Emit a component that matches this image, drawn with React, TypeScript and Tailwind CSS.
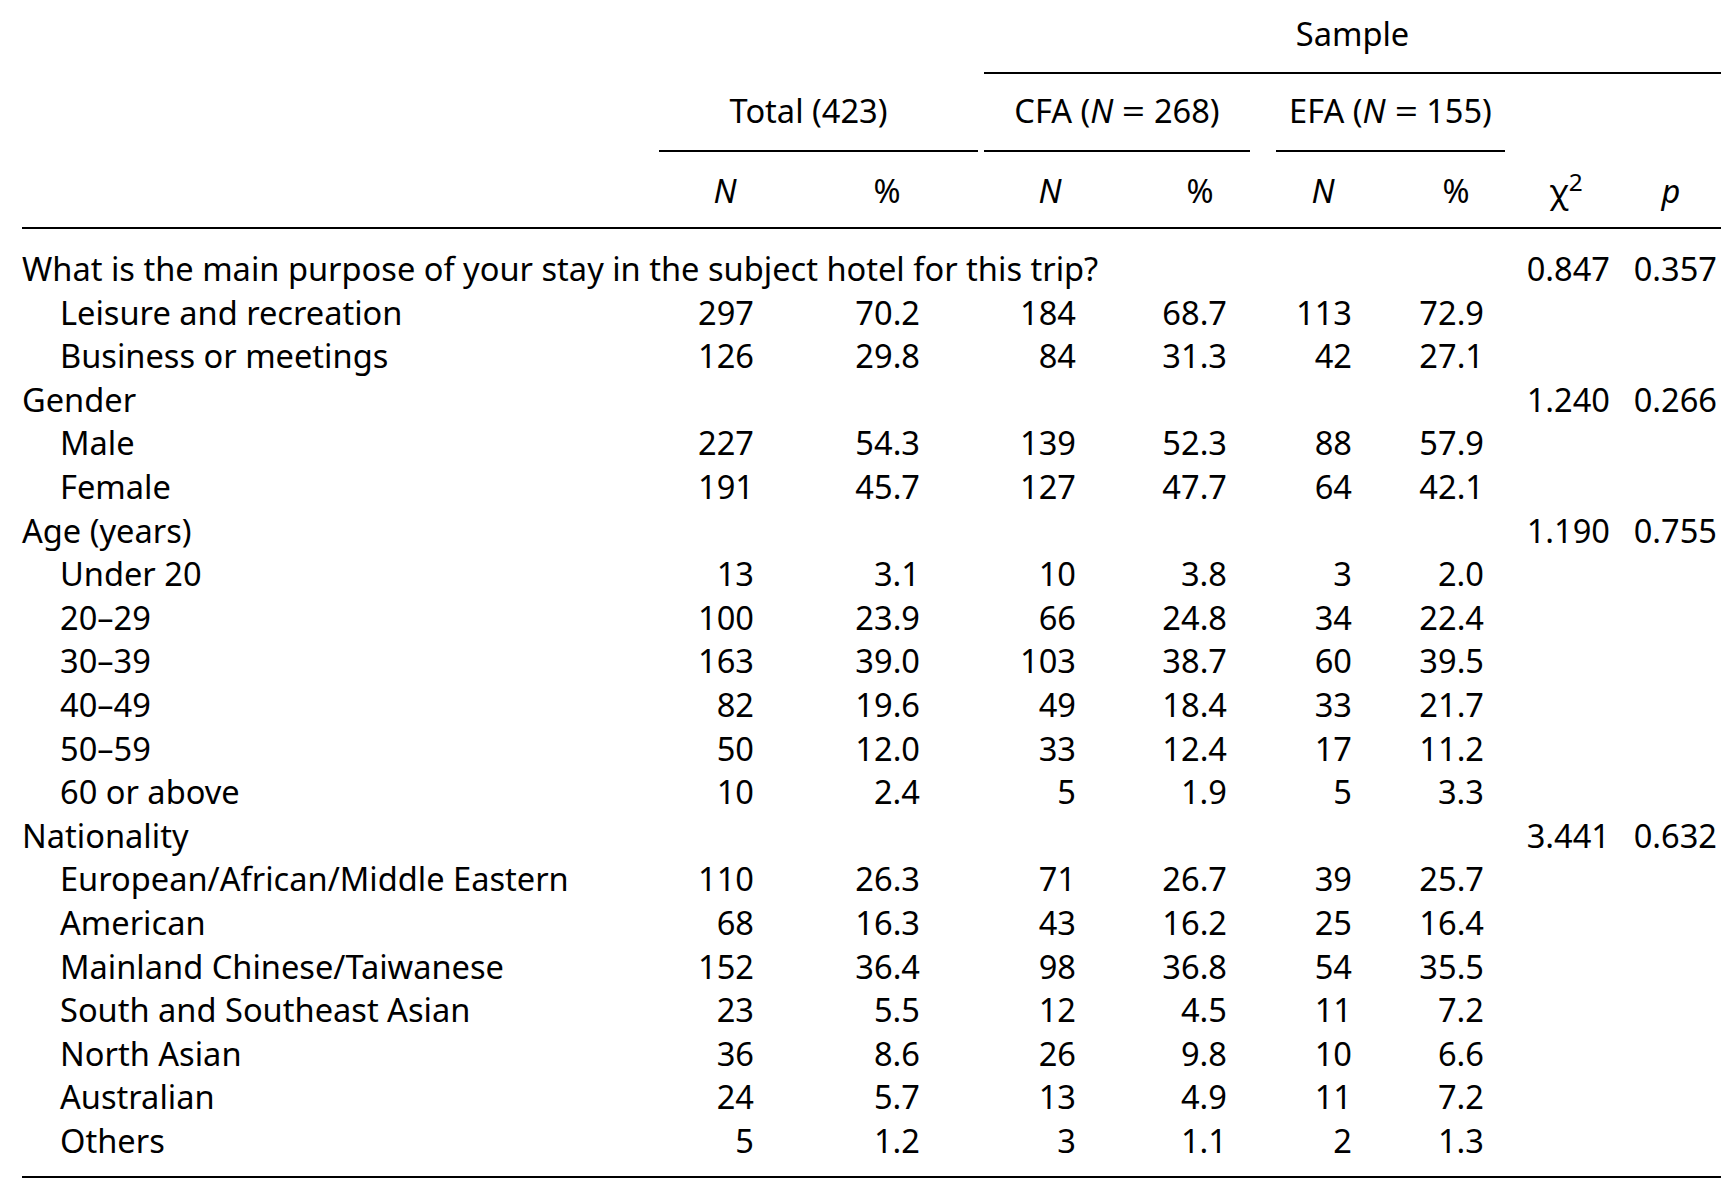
type Row = { label: string; head?: boolean; v?: string[]; chi?: string; p?: string }

const rows: Row[] = [
  { label: 'What is the main purpose of your stay in the subject hotel for this trip?', head: true, chi: '0.847', p: '0.357' },
  { label: 'Leisure and recreation', v: ['297', '70.2', '184', '68.7', '113', '72.9'] },
  { label: 'Business or meetings', v: ['126', '29.8', '84', '31.3', '42', '27.1'] },
  { label: 'Gender', head: true, chi: '1.240', p: '0.266' },
  { label: 'Male', v: ['227', '54.3', '139', '52.3', '88', '57.9'] },
  { label: 'Female', v: ['191', '45.7', '127', '47.7', '64', '42.1'] },
  { label: 'Age (years)', head: true, chi: '1.190', p: '0.755' },
  { label: 'Under 20', v: ['13', '3.1', '10', '3.8', '3', '2.0'] },
  { label: '20–29', v: ['100', '23.9', '66', '24.8', '34', '22.4'] },
  { label: '30–39', v: ['163', '39.0', '103', '38.7', '60', '39.5'] },
  { label: '40–49', v: ['82', '19.6', '49', '18.4', '33', '21.7'] },
  { label: '50–59', v: ['50', '12.0', '33', '12.4', '17', '11.2'] },
  { label: '60 or above', v: ['10', '2.4', '5', '1.9', '5', '3.3'] },
  { label: 'Nationality', head: true, chi: '3.441', p: '0.632' },
  { label: 'European/African/Middle Eastern', v: ['110', '26.3', '71', '26.7', '39', '25.7'] },
  { label: 'American', v: ['68', '16.3', '43', '16.2', '25', '16.4'] },
  { label: 'Mainland Chinese/Taiwanese', v: ['152', '36.4', '98', '36.8', '54', '35.5'] },
  { label: 'South and Southeast Asian', v: ['23', '5.5', '12', '4.5', '11', '7.2'] },
  { label: 'North Asian', v: ['36', '8.6', '26', '9.8', '10', '6.6'] },
  { label: 'Australian', v: ['24', '5.7', '13', '4.9', '11', '7.2'] },
  { label: 'Others', v: ['5', '1.2', '3', '1.1', '2', '1.3'] },
]

const grid = 'grid grid-cols-[637px_95px_166px_156px_151px_125px_132px_126px_107px]'

// header label boxes, centred on the data column, right edge = data right edge
const subHeads = [
  { w: 'w-[58px]', el: <i>N</i> },
  { w: 'w-[66px]', el: '%' },
  { w: 'w-[52px]', el: <i>N</i> },
  { w: 'w-[54px]', el: '%' },
  { w: 'w-[58px]', el: <i>N</i> },
  { w: 'w-[56px]', el: '%' },
  { w: 'w-[88px]', el: <span>χ<sup>2</sup></span> },
  { w: 'w-[92px]', el: <i>p</i> },
]

const Eq = () => <span className="mx-[11px] inline-block scale-x-125">=</span>

export default function App() {
  return (
    <div className="min-h-screen bg-white text-black font-['Noto_Sans',sans-serif] text-[32.6px]">
      <div className="ml-[22px] w-[1699px]">
        {/* Sample */}
        <div className="flex">
          <div className="ml-[962px] w-[737px] border-b-2 border-black text-center pt-[12px] pb-[16px] leading-[44px]">Sample</div>
        </div>

        {/* group heads */}
        <div className="flex leading-[44px] whitespace-nowrap">
          <div className="w-[637px]" />
          <div className="w-[319px] pr-[20px] text-center border-b-2 border-black pt-[15px] pb-[17px]">Total (423)</div>
          <div className="ml-[6px] w-[266px] text-center border-b-2 border-black pt-[15px] pb-[17px]">CFA (<i>N</i><Eq />268)</div>
          <div className="ml-[26px] w-[229px] text-center border-b-2 border-black pt-[15px] pb-[17px]">EFA (<i>N</i><Eq />155)</div>
        </div>

        {/* N / % */}
        <div className={`${grid} leading-[44px] pt-[17px] pb-[14px] border-b-2 border-black`}>
          <div />
          {subHeads.map((h, i) => (
            <div key={i} className="flex justify-end">
              <div className={`${h.w} text-center`}>{h.el}</div>
            </div>
          ))}
        </div>

        {/* body */}
        <div className="pt-[18px] pb-[14px] border-b-2 border-black leading-[43.6px]">
          {rows.map(r => r.head ? (
            <div key={r.label} className={grid}>
              <div className="col-span-7 whitespace-nowrap">{r.label}</div>
              <div className="text-right">{r.chi}</div>
              <div className="text-right">{r.p}</div>
            </div>
          ) : (
            <div key={r.label} className={grid}>
              <div className="pl-[38px] whitespace-nowrap">{r.label}</div>
              {r.v!.map((n, i) => <div key={i} className="text-right">{n}</div>)}
              <div />
              <div />
            </div>
          ))}
        </div>
      </div>
    </div>
  )
}
